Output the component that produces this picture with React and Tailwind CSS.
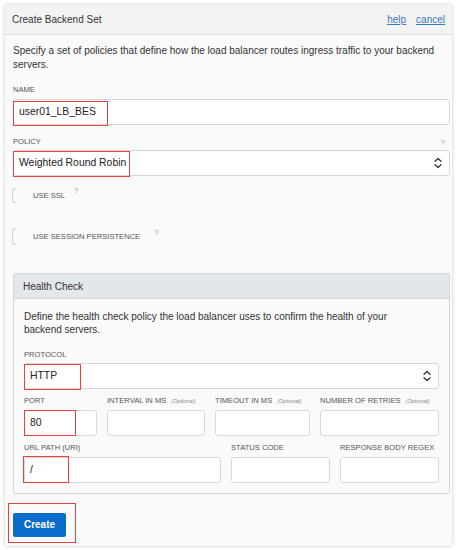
import React from "react";

function Chevrons() {
  return (
    <svg width="8" height="12" viewBox="0 0 8 12" fill="none" stroke="#333" strokeWidth="1.3" strokeLinecap="round" strokeLinejoin="round">
      <path d="M1 4.2L4 1.4L7 4.2" />
      <path d="M1 7.8L4 10.6L7 7.8" />
    </svg>
  );
}

function Label({ children, optional, className = "" }) {
  return (
    <div className={`flex items-center h-[10px] text-[7.6px] leading-[10px] text-[#555] uppercase ${className}`}>
      <span>{children}</span>
      {optional && <span className="ml-[5px] text-[5.5px] italic normal-case text-[#888]">(Optional)</span>}
    </div>
  );
}

function Field({ value, className = "", children }) {
  return (
    <div className={`relative h-[26px] bg-white border border-[#d6d8da] rounded-[3px] flex items-center px-[5px] text-[10.4px] text-[#222] ${className}`}>
      {value}
      {children}
    </div>
  );
}

function RedBox({ className }) {
  return <div className={`absolute border-[1.5px] border-[#e8413f] pointer-events-none ${className}`} />;
}

export default function App() {
  return (
    <div className="w-[459px] h-[550px] bg-white pt-[5px] pl-[5px]" style={{ fontFamily: '"Liberation Sans", Arial, sans-serif' }}>
      <div className="relative w-[447px] bg-[#fafafa] shadow-[0_0_4px_rgba(0,0,0,0.22)]">
        <div className="h-[30px] bg-[#f3f3f3] border-b border-[#dcdcdc] flex items-center justify-between pl-[7px] pr-[7px]">
          <span className="text-[10px] text-[#333]">Create Backend Set</span>
          <div className="flex gap-[10px] text-[10px] text-[#3a78c4] underline">
            <a href="#">help</a>
            <a href="#">cancel</a>
          </div>
        </div>

        <div className="pl-[8px] pr-[2px] pt-[9px] pb-[9px]">
          <p className="text-[10px] leading-[14px] text-[#333] pr-[2px]">
            Specify a set of policies that define how the load balancer routes ingress traffic to your backend servers.
          </p>

          <Label className="mt-[13px]">Name</Label>
          <div className="relative mt-[4px]">
            <Field value="user01_LB_BES" />
            <RedBox className="left-0 top-[2px] w-[95px] h-[25px]" />
          </div>

          <div className="mt-[10px] flex justify-between items-end">
            <Label>Policy</Label>
            <span className="text-[8px] text-[#999] mr-[5px] translate-y-[2px]">?</span>
          </div>
          <div className="relative mt-[3px]">
            <Field value="Weighted Round Robin" className="justify-between pr-[7px]">
              <Chevrons />
            </Field>
            <RedBox className="left-0 top-[1px] w-[117px] h-[26px]" />
          </div>

          <div className="mt-[12px] flex items-center h-[15px]">
            <div className="w-[5px] h-[15px] border-l border-y border-[#d4d4d4] rounded-l-[3px] -ml-[1px]" />
            <span className="ml-[16px] text-[7.6px] text-[#555]">USE SSL</span>
            <span className="ml-[9px] text-[7.5px] text-[#999] -translate-y-[5px]">?</span>
          </div>
          <div className="mt-[25px] flex items-center h-[17px]">
            <div className="w-[5px] h-[17px] border-l border-y border-[#d4d4d4] rounded-l-[3px] -ml-[1px]" />
            <span className="ml-[16px] text-[7.6px] text-[#555]">USE SESSION PERSISTENCE</span>
            <span className="ml-[14px] text-[7.5px] text-[#999] -translate-y-[4px]">?</span>
          </div>

          <div className="mt-[28px] border border-[#d4d7da] rounded-[2px]">
            <div className="h-[25px] bg-[#e4e7ea] border-b border-[#d4d7da] flex items-center pl-[9px] text-[10px] text-[#333]">
              Health Check
            </div>
            <div className="bg-[#fafafa] px-[10px] pt-[11px] pb-[10px]">
              <p className="text-[10px] leading-[13px] text-[#333] pr-[40px]">
                Define the health check policy the load balancer uses to confirm the health of your backend servers.
              </p>

              <Label className="mt-[14px]">Protocol</Label>
              <div className="relative mt-[3px]">
                <Field value="HTTP" className="justify-between pr-[7px]">
                  <Chevrons />
                </Field>
                <RedBox className="left-0 top-[1px] w-[57px] h-[26px]" />
              </div>

              <div className="mt-[7px] flex gap-[10px]">
                <div className="w-[73px]">
                  <Label>Port</Label>
                  <div className="relative mt-[4px]">
                    <Field value="80" />
                    <RedBox className="left-0 top-0 w-[52px] h-[26px]" />
                  </div>
                </div>
                <div className="w-[98px]">
                  <Label optional>Interval in ms</Label>
                  <Field className="mt-[4px]" />
                </div>
                <div className="w-[95px]">
                  <Label optional>Timeout in ms</Label>
                  <Field className="mt-[4px]" />
                </div>
                <div className="flex-1">
                  <Label optional>Number of retries</Label>
                  <Field className="mt-[4px]" />
                </div>
              </div>

              <div className="mt-[7px] flex gap-[10px]">
                <div className="w-[197px]">
                  <Label>URL Path (URI)</Label>
                  <div className="relative mt-[4px]">
                    <Field value="/" />
                    <RedBox className="-left-[1px] -top-[1px] w-[46px] h-[27px]" />
                  </div>
                </div>
                <div className="w-[99px]">
                  <Label>Status Code</Label>
                  <Field className="mt-[4px]" />
                </div>
                <div className="flex-1">
                  <Label>Response Body Regex</Label>
                  <Field className="mt-[4px]" />
                </div>
              </div>
            </div>
          </div>

          <div className="relative mt-[17px] w-[53px]">
            <button className="w-[53px] h-[24px] bg-[#0b6bcb] rounded-[2px] text-white text-[10px] font-bold">
              Create
            </button>
            <RedBox className="-left-[5px] -top-[8px] w-[68px] h-[40px]" />
          </div>
        </div>
      </div>
    </div>
  );
}
